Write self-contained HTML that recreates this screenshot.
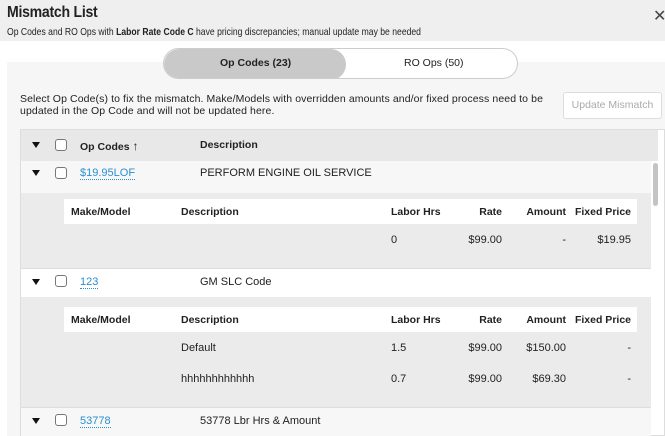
<!DOCTYPE html>
<html><head><style>
*{margin:0;padding:0;box-sizing:border-box}
body{width:665px;height:436px;overflow:hidden;background:#fff;font-family:"Liberation Sans",sans-serif;color:#222;position:relative;font-size:11px}
.a{position:absolute;white-space:nowrap}
.cb{position:absolute;width:12px;height:12px;border:1px solid #777;border-radius:3px;background:#fff}
.tri{position:absolute;width:0;height:0;border-left:4px solid transparent;border-right:4px solid transparent;border-top:6px solid #111}
.lnk{color:#2a8fd0;border-bottom:1px dotted #2a8fd0}
b{font-weight:bold}
.hdr{font-weight:bold;font-size:10.5px}
</style></head><body>
<div class="a" style="left:0;top:0;width:665px;height:41px;background:#efefef"></div>
<div class="a" style="left:7px;top:4px;font-size:16px;letter-spacing:-0.3px;font-weight:bold;transform:scaleX(0.88);transform-origin:left">Mismatch List</div>
<div class="a" style="left:7px;top:26px;font-size:10.5px;transform:scaleX(0.82);transform-origin:left">Op Codes and RO Ops with <b>Labor Rate Code C</b> have pricing discrepancies; manual update may be needed</div>
<div class="a" style="left:653px;top:6px;font-size:16px;color:#444">✕</div>
<div class="a" style="left:7px;top:62px;width:658px;height:374px;background:#f6f6f6"></div>
<div class="a" style="left:163px;top:48px;width:355px;height:31px;border:1px solid #ccc;border-radius:16px;background:#fff;overflow:hidden">
 <div style="position:absolute;left:0;top:0;width:182px;height:31px;background:#c9c9c9;border-radius:16px"></div>
</div>
<div class="a hdr" style="left:220px;top:57px">Op Codes (23)</div>
<div class="a" style="left:404px;top:57px;font-size:10.5px">RO Ops (50)</div>
<div class="a" style="left:20px;top:93px;font-size:10.5px;line-height:12px;letter-spacing:0.1px">Select Op Code(s) to fix the mismatch. Make/Models with overridden amounts and/or fixed process need to be<br>updated in the Op Code and will not be updated here.</div>
<div class="a" style="left:563px;top:92px;width:99px;height:27px;border:1px solid #ddd;border-radius:3px;background:#fff;color:#aaa;font-size:10.5px;text-align:center;line-height:25px">Update Mismatch</div>
<div class="a" style="left:20px;top:129px;width:645px;height:307px;border:1px solid #ddd;background:#fff"></div>
<div class="a" style="left:21px;top:130px;width:637px;height:31px;background:#e8e8e8"></div>
<div class="tri" style="left:32px;top:142px"></div><div class="cb" style="left:55px;top:139px"></div>
<div class="a hdr" style="left:80px;top:139px">Op Codes <span style="font-size:12px">↑</span></div>
<div class="a hdr" style="left:200px;top:139px">Description</div>
<div class="a" style="left:21px;top:161px;width:630px;height:32px;background:#f7f7f7"></div>
<div class="tri" style="left:32px;top:170px"></div><div class="cb" style="left:55px;top:167px"></div>
<div class="a" style="left:80px;top:167px"><span class="lnk">$19.95LOF</span></div>
<div class="a" style="left:200px;top:167px">PERFORM ENGINE OIL SERVICE</div>
<div class="a" style="left:21px;top:193px;width:630px;height:76px;background:#ebebeb;border-bottom:1px solid #ddd"></div>
<div class="a" style="left:64px;top:199px;width:573px;height:25px;background:#fff"></div>
<div class="a" style="left:21px;top:269px;width:630px;height:28px;background:#fff"></div>
<div class="tri" style="left:32px;top:279px"></div><div class="cb" style="left:55px;top:275px"></div>
<div class="a" style="left:80px;top:276px"><span class="lnk">123</span></div>
<div class="a" style="left:200px;top:276px">GM SLC Code</div>
<div class="a" style="left:21px;top:297px;width:630px;height:111px;background:#ebebeb;border-bottom:1px solid #ddd"></div>
<div class="a" style="left:64px;top:307px;width:573px;height:25px;background:#fff"></div>
<div class="a" style="left:21px;top:408px;width:630px;height:28px;background:#f7f7f7"></div>
<div class="tri" style="left:32px;top:418px"></div><div class="cb" style="left:55px;top:414px"></div>
<div class="a" style="left:80px;top:415px"><span class="lnk">53778</span></div>
<div class="a" style="left:200px;top:415px">53778 Lbr Hrs &amp; Amount</div>
<div class="a" style="left:653px;top:163px;width:5px;height:43px;background:#c4c4c4;border-radius:3px"></div>
<div class="a hdr" style="left:71px;top:206px">Make/Model</div><div class="a hdr" style="left:181px;top:206px">Description</div><div class="a hdr" style="left:391px;top:206px">Labor Hrs</div>
<div class="a hdr" style="right:163px;top:206px">Rate</div><div class="a hdr" style="right:99px;top:206px">Amount</div><div class="a hdr" style="right:34px;top:206px">Fixed Price</div>
<div class="a" style="left:391px;top:234px">0</div><div class="a" style="right:163px;top:234px">$99.00</div><div class="a" style="right:99px;top:234px">-</div><div class="a" style="right:34px;top:234px">$19.95</div>
<div class="a hdr" style="left:71px;top:314px">Make/Model</div><div class="a hdr" style="left:181px;top:314px">Description</div><div class="a hdr" style="left:391px;top:314px">Labor Hrs</div>
<div class="a hdr" style="right:163px;top:314px">Rate</div><div class="a hdr" style="right:99px;top:314px">Amount</div><div class="a hdr" style="right:34px;top:314px">Fixed Price</div>
<div class="a" style="left:181px;top:342px">Default</div><div class="a" style="left:391px;top:342px">1.5</div><div class="a" style="right:163px;top:342px">$99.00</div><div class="a" style="right:99px;top:342px">$150.00</div><div class="a" style="right:34px;top:342px">-</div>
<div class="a" style="left:181px;top:373px">hhhhhhhhhhhh</div><div class="a" style="left:391px;top:373px">0.7</div><div class="a" style="right:163px;top:373px">$99.00</div><div class="a" style="right:99px;top:373px">$69.30</div><div class="a" style="right:34px;top:373px">-</div>
</body></html>
